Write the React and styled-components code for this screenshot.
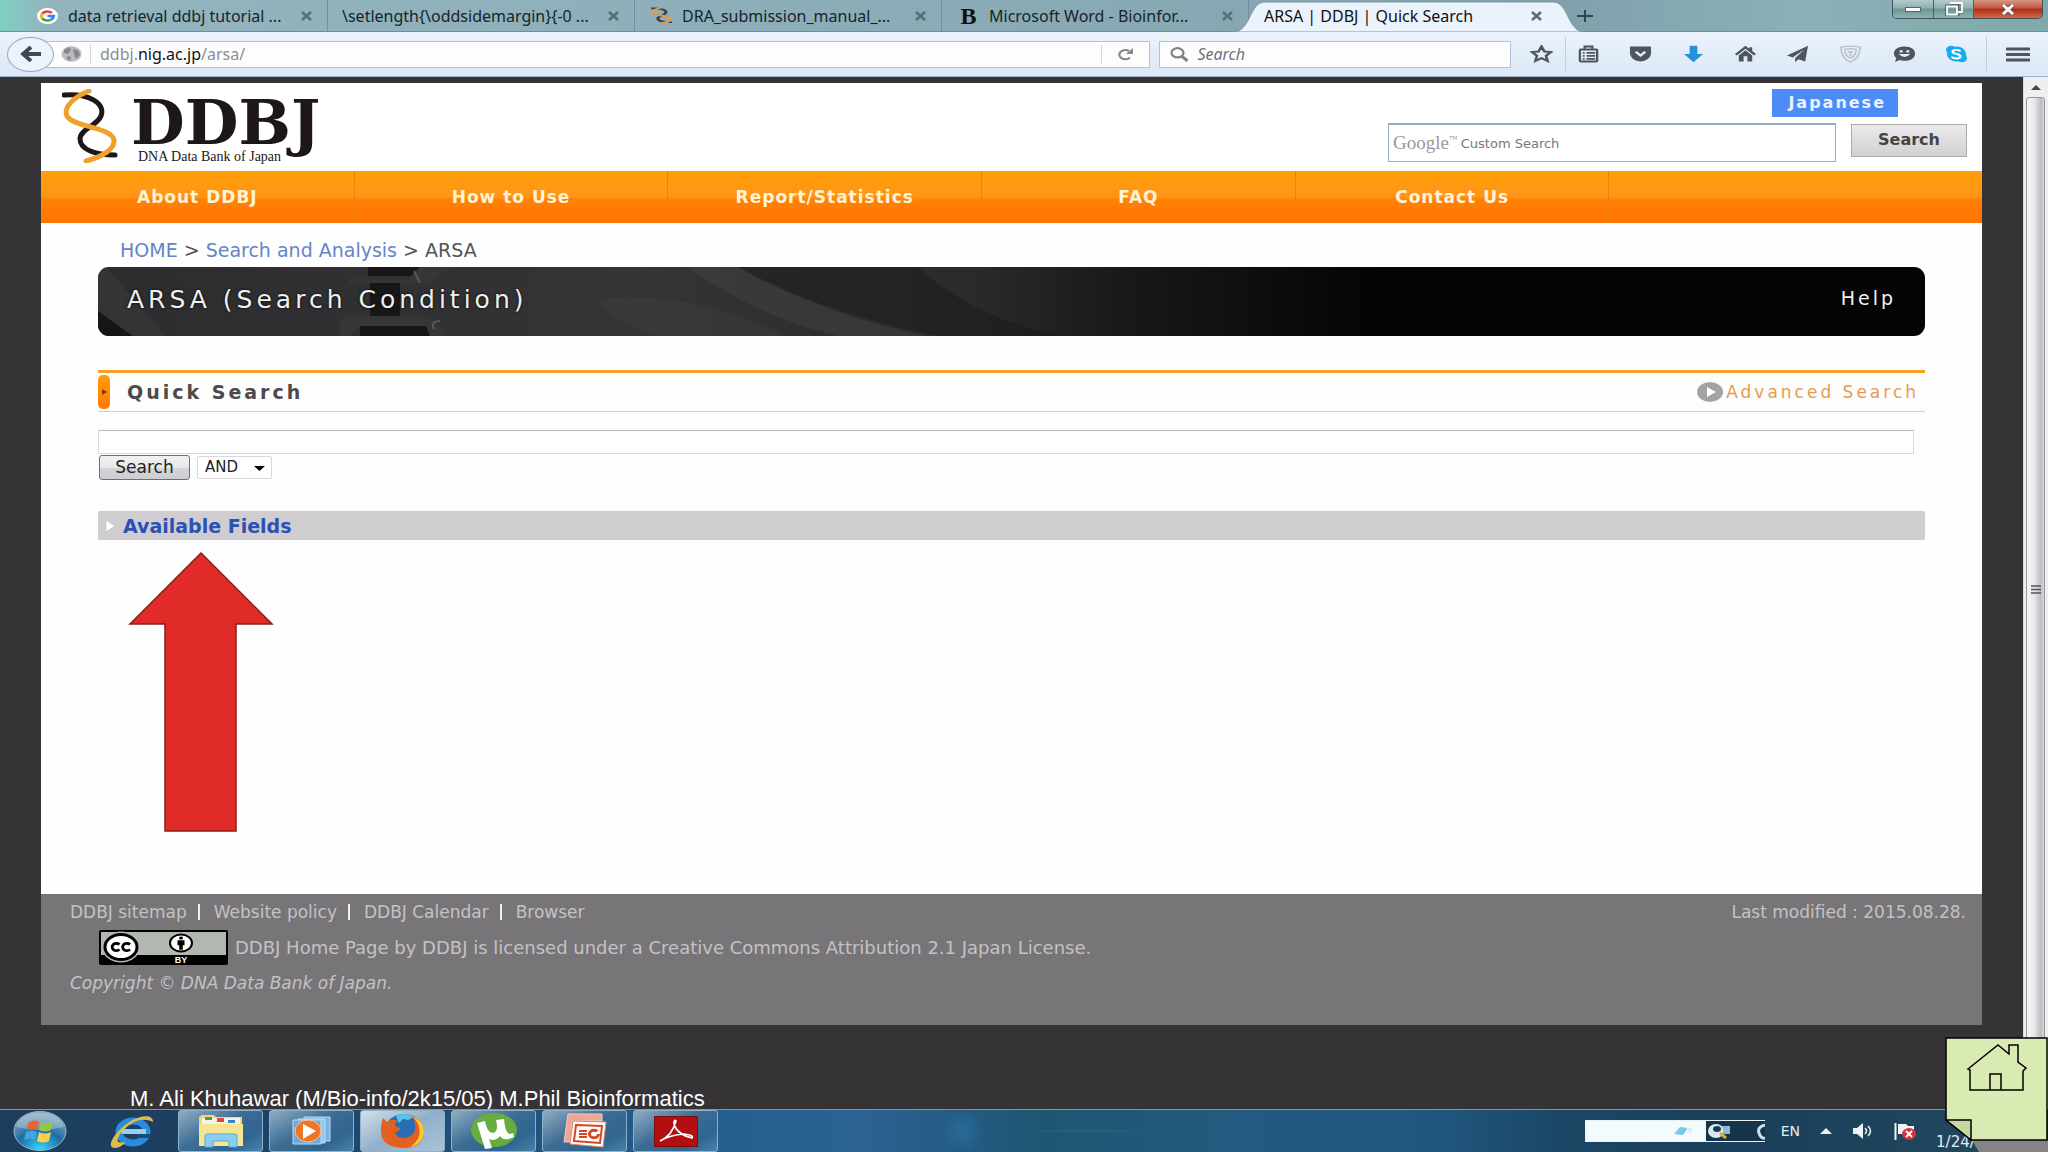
import React, { useState } from 'react';
import styled, { createGlobalStyle } from 'styled-components';

const GlobalStyle = createGlobalStyle`
  * {
    box-sizing: border-box;
  }
  body {
    margin: 0;
    background: #353336;
    font-family: 'DejaVu Sans', Verdana, sans-serif;
  }
  a {
    color: inherit;
    text-decoration: none;
  }
  button, input, select {
    font: inherit;
    margin: 0;
  }
  svg {
    display: block;
    flex: none;
  }
`;

const Screen = styled.div`
  position: relative;
  display: flex;
  flex-direction: column;
  min-height: 100vh;
  overflow: hidden;
`;

/* ---------- browser chrome ---------- */

const TabBar = styled.div`
  display: flex;
  height: 32px;
  padding-left: 21px;
  font: 16px 'Noto Sans', sans-serif;
  color: #17242b;
  background: linear-gradient(90deg, #7fcfc4 0, #93b3bd 50px, #8fafba 30%, #87a7b2 60%, #7f9fab 75%, #8cb0b7 88%, #7fa9ac 100%);
  border-bottom: 1px solid #6f8d9b;
`;
const Tab = styled.div`
  display: flex;
  align-items: center;
  flex: 0 1 307px;
  min-width: 0;
  gap: 10px;
  padding: 0 14px 0 ${(p) => (p.$icon ? '16px' : '14px')};
  border-right: 1px solid #728f9b;
`;
const ActiveTab = styled.div`
  position: relative;
  display: flex;
  align-items: center;
  flex: 0 1 308px;
  min-width: 0;
  height: 32px;
  margin-left: 6px;
  padding: 0 20px 0 9px;
  color: #111;
`;
const TabShape = styled.svg`
  position: absolute;
  left: -22px;
  top: 0;
  width: calc(100% + 44px);
  height: 32px;
`;
const TabTitle = styled.span`
  position: relative;
  flex: 1;
  overflow: hidden;
  white-space: nowrap;
`;
const IconButton = styled.button`
  position: relative;
  display: grid;
  place-items: center;
  flex: none;
  padding: 0;
  border: 0;
  background: none;
`;
const NewTab = styled(IconButton)`
  margin-left: 14px;
`;
const WindowButtons = styled.div`
  display: flex;
  height: 19px;
  margin: 0 5px 0 auto;
  border: 1px solid #3f5257;
  border-top: 0;
  border-radius: 0 0 5px 5px;
  overflow: hidden;
`;
const WindowButton = styled.button`
  display: grid;
  place-items: center;
  width: ${(p) => (p.$close ? '69px' : '40px')};
  padding: 0;
  border: 0;
  border-left: ${(p) => (p.$first ? '0' : '1px solid #4b6064')};
  background: ${(p) =>
    p.$close
      ? 'linear-gradient(#d79685, #c4563c 45%, #b02a14 50%, #d06a4a)'
      : 'linear-gradient(#b3cacb, #8fb0b0 45%, #6d9492 50%, #8db5b0)'};
`;

const Toolbar = styled.div`
  display: flex;
  align-items: center;
  height: 45px;
  padding-left: 7px;
  font: 16px 'Noto Sans', sans-serif;
  background: linear-gradient(#eaf2fc, #dce8f7);
  border-bottom: 1px solid #9fb0c4;
`;
const BackButton = styled(IconButton)`
  width: 47px;
  height: 35px;
  margin-right: -12px;
  border: 1px solid #9aa9ba;
  border-radius: 50%;
  background: #edf3fb;
  z-index: 1;
`;
const UrlBar = styled.div`
  display: flex;
  align-items: center;
  flex: 1112;
  height: 27px;
  padding-left: 18px;
  background: #fdfdfe;
  border: 1px solid #b4c2d3;
`;
const UrlInput = styled.div`
  display: flex;
  flex: 1;
  margin-left: 8px;
  padding-left: 9px;
  border-left: 1px solid #d3d7dc;
  line-height: 20px;
  color: #8a8d92;

  b {
    font-weight: 400;
    color: #111;
  }
`;
const Reload = styled(IconButton)`
  width: 48px;
  height: 18px;
  border-left: 1px solid #d3d7dc;
`;
const BrowserSearch = styled.label`
  display: flex;
  align-items: center;
  flex: 347;
  gap: 8px;
  height: 27px;
  margin-left: 9px;
  padding-left: 10px;
  background: #fdfdfe;
  border: 1px solid #b4c2d3;

  input {
    flex: 1;
    min-width: 0;
    padding: 0;
    border: 0;
    background: none;
  }
  input::placeholder {
    color: #6f7378;
    font-style: italic;
  }
`;
const ToolIcons = styled.div`
  display: flex;
  align-items: center;
  margin-left: 6px;
`;
const ToolIcon = styled(IconButton)`
  width: ${(p) => p.$w || 53}px;
  height: 35px;
  border-left: ${(p) => (p.$line ? '1px solid #c3cedb' : '0')};
`;

/* ---------- web page ---------- */

const Viewport = styled.div`
  display: flex;
  flex: 1;
`;
const PageColumn = styled.div`
  display: flex;
  flex: 1;
  flex-direction: column;
  padding: 6px 41px 0;
`;
const Header = styled.header`
  display: flex;
  justify-content: space-between;
  height: 88px;
  padding: 6px 15px 0 21px;
  background: #fff;
`;
const Logo = styled.a`
  display: flex;
  gap: 13px;
  color: #1d1718;
`;
const LogoWords = styled.div`
  display: flex;
  flex-direction: column;
  padding-top: 8px;
`;
const LogoName = styled.span`
  font: bold 62px/52px 'DejaVu Serif', serif;
`;
const LogoSub = styled.span`
  padding-left: 7px;
  font: 14px/16px 'Liberation Serif', serif;
`;
const HeaderTools = styled.div`
  display: flex;
  flex-direction: column;
  gap: 6px;
`;
const Language = styled.a`
  align-self: flex-end;
  margin-right: 69px;
  padding: 0 12px 0 16px;
  font-size: 16px;
  line-height: 28px;
  font-weight: bold;
  letter-spacing: 2px;
  color: #e9f2ff;
  background: #4d8bf7;
`;
const SiteSearch = styled.form`
  display: flex;
  gap: 15px;
`;
const SiteSearchBox = styled.label`
  display: flex;
  align-items: center;
  width: 448px;
  height: 39px;
  padding-left: 4px;
  border: 1px solid #98abc0;
  border-top-width: 2px;
  font-size: 13px;
  color: #777;

  span {
    margin-right: 3px;
    font: 19px 'Liberation Serif', serif;
    color: #999;
  }
  sup {
    font-size: 9px;
    vertical-align: 7px;
    line-height: 0;
  }
  input {
    flex: 1;
    min-width: 0;
    border: 0;
    background: none;
  }
`;
const SiteSearchButton = styled.button`
  width: 116px;
  height: 33px;
  margin-top: 1px;
  padding: 0 0 2px;
  font-size: 16px;
  font-weight: bold;
  color: #444;
  border: 1px solid #aaa;
  background: linear-gradient(#ebe9eb, #d2d0d2);
`;
const Nav = styled.nav`
  display: grid;
  grid-template-columns: repeat(5, 16fr) 19fr;
  height: 52px;
  background: linear-gradient(#ff9f06, #ff941a 50%, #ff8205 54%, #ff7303);
`;
const NavLink = styled.a`
  display: block;
  padding-top: 14px;
  font-size: 17px;
  line-height: 24px;
  font-weight: bold;
  letter-spacing: 1px;
  text-align: center;
  color: #fff3d6;
  border-right: 1px solid #ee8208;
`;
const Main = styled.main`
  flex: 1;
  padding: 14px 57px 0;
  background: #fefefe;
`;
const Breadcrumb = styled.div`
  padding-left: 22px;
  font-size: 19px;
  line-height: 26px;
  color: #555;

  a {
    color: #6485c6;
  }
`;
const Banner = styled.div`
  position: relative;
  display: flex;
  justify-content: space-between;
  height: 69px;
  margin-top: 4px;
  padding: 0 29px;
  line-height: 62px;
  color: #f0f0f0;
  border-radius: 11px;
  overflow: hidden;
  background: linear-gradient(90deg, #2d2c2e, #343335 30%, #2a292b 48%, #19181a 56%, #040305 70%, #040305);

  h1 {
    position: relative;
    margin: 0;
    font-size: 25px;
    line-height: 66px;
    font-weight: 400;
    letter-spacing: 4px;
    text-shadow: 0 0 3px #000;
  }
  a {
    font-size: 19px;
    letter-spacing: 3px;
  }
`;
const BannerArt = styled.svg`
  position: absolute;
  left: 0;
  top: 0;
`;
const SectionHead = styled.div`
  display: flex;
  align-items: center;
  height: 42px;
  margin-top: 34px;
  border-top: 3px solid #f5a02a;
  border-bottom: 1px solid #d2cfd2;
  background: #fdfdfd;

  h2 {
    flex: 1;
    margin: 0 0 0 17px;
    font-size: 19px;
    letter-spacing: 3px;
    color: #4b4a4c;
  }
  a {
    display: flex;
    align-items: center;
    gap: 3px;
    margin-right: 6px;
    font-size: 17px;
    letter-spacing: 3px;
    color: #e79a4e;
  }
`;
const SectionMark = styled.div`
  display: grid;
  place-items: center;
  width: 12px;
  height: 34px;
  border-radius: 5px;
  background: linear-gradient(#ff9d0c, #ff7a05);
`;
const QueryInput = styled.input`
  display: block;
  width: calc(100% - 11px);
  height: 24px;
  margin-top: 18px;
  border: 1px solid #dddadd;
  border-top: 1px solid #bdbabd;
  background: #fff;
`;
const QueryControls = styled.div`
  display: flex;
  align-items: center;
  gap: 7px;
  padding: 1px;
  font-size: 15px;
`;
const QueryButton = styled.button`
  width: 91px;
  height: 25px;
  padding: 0 0 2px;
  font-size: 17px;
  line-height: 20px;
  color: #222;
  border: 1px solid #6f6f72;
  border-radius: 3px;
  background: linear-gradient(#f2f2f3, #e8e8ea 50%, #d5d6d9 52%, #cdced1);
`;
const Dropdown = styled.div`
  position: relative;

  select {
    appearance: none;
    width: 75px;
    height: 23px;
    padding: 0 0 1px 7px;
    color: #222;
    border: 1px solid #d8d8da;
    border-radius: 2px;
    background: #fff;
  }
  svg {
    position: absolute;
    right: 7px;
    top: 10px;
    pointer-events: none;
  }
`;
const FieldsBar = styled.button`
  display: flex;
  align-items: center;
  gap: 8px;
  width: 100%;
  height: 29px;
  margin-top: 30px;
  padding: 0 0 0 8px;
  font-size: 19px;
  font-weight: bold;
  color: #2c50b4;
  border: 0;
  border-radius: 2px;
  background: #cfcdcf;
`;
const Pointer = styled.svg`
  margin: 11px 0 0 30px;
`;
const Footer = styled.footer`
  display: flex;
  justify-content: space-between;
  height: 131px;
  padding: 4px 16px 0 29px;
  font-size: 17px;
  line-height: 29px;
  color: #c4c2c4;
  background: #777578;

  p {
    margin: 0;
  }
`;
const FooterLinks = styled.div`
  display: flex;

  a + a {
    margin-left: 11px;
    padding-left: 16px;
    background: linear-gradient(#eee, #eee) 0 6px / 2px 16px no-repeat;
  }
`;
const License = styled.p`
  display: flex;
  align-items: center;
  gap: 7px;
  height: 40px;
  padding-left: 29px;
  font-size: 18px;
`;
const Copyright = styled.p`
  padding-top: 2px;
  font-style: italic;
`;
const Caption = styled.p`
  height: 84px;
  margin: 0 0 0 89px;
  padding-top: 62px;
  font: 22px/24px 'Liberation Sans', Arial, sans-serif;
  color: #fff;
`;
const Scrollbar = styled.div`
  display: flex;
  flex-direction: column;
  width: 25px;
  padding: 0 3px 28px 2px;
  background: #efeef0;
  border-left: 1px solid #d9d8da;
`;
const ScrollUp = styled(IconButton)`
  height: 20px;
`;
const ScrollThumb = styled.div`
  display: grid;
  place-items: center;
  flex: 1;
  border: 1px solid #97969a;
  border-radius: 3px;
  background: linear-gradient(90deg, #f6f5f7, #e6e5e7 45%, #bfbdc1 80%, #d6d5d7);
`;

/* ---------- desktop ---------- */

const Taskbar = styled.div`
  display: flex;
  align-items: center;
  height: 43px;
  padding-left: 12px;
  border-top: 1px solid #6f9bb3;
  background:
    radial-gradient(circle at 47% 50%, #2b7ab088 0, transparent 22px),
    radial-gradient(ellipse at 53% 50%, #35647a 0, transparent 70px),
    linear-gradient(90deg, #1d3d5c 0, #1c4163 12%, #255f8f 35%, #2b6294 42%, #1e5672 51%, #245a7f 60%, #20577f 70%, #1b4766 76%, #1b3f59 85%, #214a5f 100%);
`;
const TaskIcon = styled.button`
  display: grid;
  place-items: center;
  height: 42px;
  padding: ${(p) => (p.$start ? '0' : '0 23px 0 39px')};
  border: 0;
  background: none;
`;
const TaskButton = styled.button`
  display: grid;
  place-items: center;
  width: 85px;
  height: 42px;
  margin-right: 6px;
  padding: 0;
  border: 1px solid #8db2cb;
  border-radius: 3px;
  background: ${(p) =>
    p.$active
      ? 'linear-gradient(150deg, #d5e0ea, #91afc9 50%, #aac4d8)'
      : 'linear-gradient(150deg, #8fadc2, #3c6c94 45%, #2f658f 75%, #4a82a8)'};
`;
const Tray = styled.div`
  display: flex;
  align-items: center;
  align-self: stretch;
  gap: 20px;
  margin-left: auto;
  padding-right: 35px;
  font-size: 14px;
  color: #e6edf2;
`;
const Deskband = styled.div`
  display: flex;
  align-items: center;
  width: 180px;
  height: 22px;
  margin-right: -4px;
  border: 1px solid #e9f2f6;
  border-right: 0;
  background: #15344a;
`;
const DeskbandField = styled.div`
  display: grid;
  place-items: center end;
  width: 120px;
  height: 20px;
  padding-right: 12px;
  background: #f4fbfd;
`;
const Clock = styled.time`
  align-self: flex-end;
  font-size: 15px;
  line-height: 20px;
  white-space: nowrap;
`;
const HomeNote = styled.a`
  position: absolute;
  right: 0;
  bottom: 0;
`;

function CloseGlyph() {
  return (
    <svg width="13" height="10" viewBox="0 0 13 10">
      <path d="M2 1l9 8M11 1L2 9" stroke="#5b6d76" strokeWidth="2.6" />
    </svg>
  );
}

function HelixIcon({ width, height, dark, bright, stroke }) {
  return (
    <svg width={width} height={height} viewBox="0 0 56 74" preserveAspectRatio="none">
      <g fill="none" strokeLinecap="round" strokeWidth={stroke}>
        <path d="M2 6C26 4 44 14 39 27C35 37 18 40 18 50C18 60 32 66 53 66" stroke={dark} />
        <path d="M27 2C12 8 1 18 5 27C10 38 50 38 52 51C53 60 40 68 24 72" stroke={bright} />
      </g>
    </svg>
  );
}

const tabIcons = {
  google: (
    <svg width="21" height="16" viewBox="0 0 24 24" preserveAspectRatio="none">
      <circle cx="12" cy="12" r="12" fill="#fff" />
      <g fill="none" strokeWidth="3.6">
        <path d="M17 7.5A7 7 0 0 0 6 8.5" stroke="#e54335" />
        <path d="M6 8.5a7 7 0 0 0 0 7" stroke="#f4b82e" />
        <path d="M6 15.5a7 7 0 0 0 10 2" stroke="#34a353" />
        <path d="M16 17.5a7 7 0 0 0 3-5.5h-7" stroke="#4280ef" />
      </g>
    </svg>
  ),
  helix: <HelixIcon width={21} height={17} dark="#3b4448" bright="#dd9c48" stroke={8} />,
};

const BTabIcon = styled.span`
  width: 21px;
  font: bold 24px/24px 'Liberation Serif', serif;
  text-align: center;
  color: #111;
`;

const tabs = [
  { title: 'data retrieval ddbj tutorial ...', icon: tabIcons.google },
  { title: '\\setlength{\\oddsidemargin}{-0 ...' },
  { title: 'DRA_submission_manual_...', icon: tabIcons.helix },
  { title: 'Microsoft Word - Bioinfor...', icon: <BTabIcon>B</BTabIcon> },
];

const tools = [
  {
    name: 'Bookmark',
    w: 48,
    art: <path d="M12 2l3 6.6 7 .8-5.200 4.800 1.500 7L12 17.600 5.700 21.200l1.500-7L2 9.400l7-.8z" fill="none" stroke="#4c5561" strokeWidth="2.800" />,
  },
  {
    name: 'Bookmarks list',
    w: 45,
    line: true,
    art: (
      <g fill="none" stroke="#4c5561" strokeWidth="2.400">
        <rect x="3" y="6" width="18" height="16" rx="1" />
        <path d="M8 5V2h8v3M6 10.500h2m2 0h9M6 14.500h2m2 0h9M6 18.500h2m2 0h9" />
      </g>
    ),
  },
  {
    name: 'Pocket',
    w: 60,
    art: (
      <g>
        <path d="M2 2h20q1 0 1 1.500V11a11 11 0 0 1-22 0V3.500Q1 2 2 2z" fill="#4c5561" />
        <path d="M7 9l5 5 5-5" fill="none" stroke="#e6eef9" strokeWidth="2.800" />
      </g>
    ),
  },
  { name: 'Downloads', w: 46, art: <path d="M8 1h8v11h6L12 23 2 12h6z" fill="#2394dc" /> },
  {
    name: 'Home',
    w: 59,
    art: <path d="M12 1L1 12l2 2 9-9 9 9 2-2-4-4V3h-3v2zM12 7l-7 7v8h5v-7h4v7h5v-8z" fill="#4c5561" />,
  },
  { name: 'Share', w: 44, art: <path d="M23 1L1 14l6 2.500L19 6 9.500 17.500V23l3.500-4 7 3z" fill="#4c5561" /> },
  {
    name: 'Shield',
    w: 63,
    art: (
      <g fill="none" stroke="#bcc2c9" strokeWidth="1.800">
        <path d="M2 3q10-3 20 0 0 14-10 20Q2 17 2 3z" />
        <path d="M6 6q6-2 12 0 0 8-6 12Q6 14 6 6zM9 9h6M12 9v6" />
      </g>
    ),
  },
  {
    name: 'Chat',
    w: 44,
    art: (
      <g>
        <path d="M12 2c7 0 11 4 11 9.500S19 21 12 21c-2 0-3.500-.3-5-1l-5 2.500 1.500-5C2 15.500 1 13.500 1 11.500 1 6 5 2 12 2z" fill="#4c5561" />
        <path d="M6 12q6 8 12 0zM7 7h3v3H7zM14 7h3v3h-3z" fill="#e6eef9" />
      </g>
    ),
  },
  {
    name: 'Skype',
    w: 60,
    art: (
      <g>
        <circle cx="12" cy="12" r="10" fill="#14aef0" />
        <circle cx="6.500" cy="6.500" r="5.500" fill="#14aef0" />
        <circle cx="17.500" cy="17.500" r="5.500" fill="#14aef0" />
        <path d="M16 8.500C15 6 8 5.500 8 9s8 2 8 6-8 3.500-8.500.5" fill="none" stroke="#fff" strokeWidth="2.600" />
      </g>
    ),
  },
];

const BrowserChrome = () => (
  <>
    <TabBar>
      {tabs.map((tab) => (
        <Tab key={tab.title} $icon={Boolean(tab.icon)}>
          {tab.icon}
          <TabTitle>{tab.title}</TabTitle>
          <IconButton aria-label="Close tab">
            <CloseGlyph />
          </IconButton>
        </Tab>
      ))}
      <ActiveTab>
        <TabShape viewBox="0 0 352 32" preserveAspectRatio="none">
          <path d="M0 32C18 32 16 2 32 2H320C336 2 334 32 352 32z" fill="#eaf2fb" stroke="#7d97a5" />
        </TabShape>
        <TabTitle>ARSA | DDBJ | Quick Search</TabTitle>
        <IconButton aria-label="Close tab">
          <CloseGlyph />
        </IconButton>
      </ActiveTab>
      <NewTab aria-label="New tab">
        <svg width="16" height="12" viewBox="0 0 16 12">
          <path d="M8 0v12M0 6h16" stroke="#33464e" strokeWidth="2" />
        </svg>
      </NewTab>
      <WindowButtons>
        <WindowButton $first aria-label="Minimize">
          <svg width="16" height="5">
            <rect x=".5" y=".5" width="15" height="4" fill="#fff" stroke="#56686c" />
          </svg>
        </WindowButton>
        <WindowButton aria-label="Restore">
          <svg width="18" height="14" viewBox="0 0 18 14">
            <path d="M5 1h12v9h-4M1 4h12v9H1z" fill="none" stroke="#56686c" strokeWidth="3" />
            <path d="M5 1h12v9h-4M2 4.500h10v8H2z" fill="none" stroke="#fff" strokeWidth="1.800" />
          </svg>
        </WindowButton>
        <WindowButton $close aria-label="Close">
          <svg width="16" height="11" viewBox="0 0 16 11">
            <path d="M3 1l10 9M13 1L3 10" stroke="#6b4540" strokeWidth="4.600" />
            <path d="M3 1l10 9M13 1L3 10" stroke="#fff" strokeWidth="3" />
          </svg>
        </WindowButton>
      </WindowButtons>
    </TabBar>
    <Toolbar>
      <BackButton aria-label="Back">
        <svg width="22" height="16" viewBox="0 0 22 16">
          <path d="M11 1L3 8l8 7M3 8h18" fill="none" stroke="#3f4854" strokeWidth="3.800" />
        </svg>
      </BackButton>
      <UrlBar>
        <svg width="21" height="16" viewBox="0 0 21 16">
          <ellipse cx="10.500" cy="8" rx="10" ry="7.800" fill="#b9bbbe" />
          <path d="M3 4l5-3 2 3-3 4-4-1zM12 3l5 1 2 5-4 4-2-5zM6 10l4 1-1 4-3-2z" fill="#85888c" />
        </svg>
        <UrlInput>
          ddbj.<b>nig.ac.jp</b>/arsa/
        </UrlInput>
        <Reload aria-label="Reload">
          <svg width="17" height="13" viewBox="0 0 17 13">
            <path d="M13 9.500A6 4.600 0 1 1 12 3" fill="none" stroke="#85898e" strokeWidth="2.200" />
            <path d="M16 0v6H9z" fill="#85898e" />
          </svg>
        </Reload>
      </UrlBar>
      <BrowserSearch>
        <svg width="19" height="15" viewBox="0 0 19 15">
          <ellipse cx="7.500" cy="5.800" rx="6" ry="4.600" fill="none" stroke="#7f8388" strokeWidth="2.200" />
          <path d="M11.500 9l6 5" stroke="#7f8388" strokeWidth="3" />
        </svg>
        <input placeholder="Search" aria-label="Search the web" />
      </BrowserSearch>
      <ToolIcons>
        {tools.map((tool) => (
          <ToolIcon key={tool.name} $w={tool.w} $line={tool.line} aria-label={tool.name}>
            <svg width="23" height="18" viewBox="0 0 24 24" preserveAspectRatio="none">
              {tool.art}
            </svg>
          </ToolIcon>
        ))}
        <ToolIcon $w={62} $line aria-label="Menu">
          <svg width="24" height="15" viewBox="0 0 24 15">
            <path d="M1 2h22M1 7.500h22M1 13h22" stroke="#4c5561" strokeWidth="3" strokeLinecap="round" />
          </svg>
        </ToolIcon>
      </ToolIcons>
    </Toolbar>
  </>
);

const SiteHeader = () => (
  <Header>
    <Logo href="#">
      <HelixIcon width={56} height={74} dark="#1d1718" bright="#f0a02c" stroke={5} />
      <LogoWords>
        <LogoName>DDBJ</LogoName>
        <LogoSub>DNA Data Bank of Japan</LogoSub>
      </LogoWords>
    </Logo>
    <HeaderTools>
      <Language href="#">Japanese</Language>
      <SiteSearch onSubmit={(e) => e.preventDefault()}>
        <SiteSearchBox>
          <span>
            Google<sup>™</sup>
          </span>
          Custom Search
          <input />
        </SiteSearchBox>
        <SiteSearchButton>Search</SiteSearchButton>
      </SiteSearch>
    </HeaderTools>
  </Header>
);

const navItems = ['About DDBJ', 'How to Use', 'Report/Statistics', 'FAQ', 'Contact Us'];

const CcBadge = () => (
  <svg width="129" height="35" viewBox="0 0 129 35">
    <rect x="1" y="1" width="127" height="33" rx="1" fill="#b1b8b0" stroke="#000" strokeWidth="2" />
    <path d="M1 25h127v9H1z" fill="#000" />
    <ellipse cx="22" cy="17" rx="19" ry="15.500" fill="#b1b8b0" />
    <ellipse cx="22" cy="17" rx="16" ry="12.500" fill="#fff" stroke="#000" strokeWidth="3" />
    <path d="M20.500 14.500a4.300 3.600 0 1 0 0 5M31 14.500a4.300 3.600 0 1 0 0 5" fill="none" stroke="#000" strokeWidth="2.800" />
    <ellipse cx="82" cy="13" rx="11" ry="8.500" fill="#fff" stroke="#000" strokeWidth="2" />
    <ellipse cx="82" cy="8" rx="2" ry="1.600" fill="#000" />
    <path d="M78.500 10.300h7v5h-1.700v4.500h-3.600v-4.500h-1.700z" fill="#000" />
    <text x="82" y="32.500" textAnchor="middle" fontFamily="Liberation Sans" fontWeight="bold" fontSize="9" fill="#fff">
      BY
    </text>
  </svg>
);

const taskIcons = {
  start: (
    <svg width="56" height="42" viewBox="0 0 56 42">
      <defs>
        <radialGradient id="orb" cx=".5" cy=".95" r=".9">
          <stop offset="0" stopColor="#35d3fb" />
          <stop offset=".5" stopColor="#1c6fa8" />
          <stop offset="1" stopColor="#8aa7ba" />
        </radialGradient>
      </defs>
      <ellipse cx="28" cy="21" rx="26" ry="19.500" fill="url(#orb)" stroke="#9db9c9" />
      <path d="M4 17Q8 3 28 3T52 17Q28 23 4 17z" fill="#dce8ef" opacity=".35" />
      <path d="M17 12q5-3 10 0l-2 8q-5-3-11 0z" fill="#ea6432" />
      <path d="M29 12q6 3 12-1l-2 9q-6 3-12 0z" fill="#94c648" />
      <path d="M14 22q5-3 11 0l-2 8q-5-3-11 0z" fill="#42a5e4" />
      <path d="M27 22q6 3 12 0l-2 9q-6 3-12 0z" fill="#fdcf4d" />
    </svg>
  ),
  ie: (
    <svg width="48" height="36" viewBox="0 0 48 36">
      <ellipse cx="26" cy="19" rx="14" ry="11" fill="none" stroke="#2b8bdc" strokeWidth="7" />
      <path d="M15 18.500h24" stroke="#8fd0f7" strokeWidth="5" />
      <path d="M30 21h13v4H30z" fill="#1d4a70" />
      <path d="M46 9C46 0 30 2 17 13S0 35 8 35c4 0 8-3 11-6C10 31 8 28 14 20S33 2 46 9z" fill="#dcbd4c" />
    </svg>
  ),
  explorer: (
    <svg width="46" height="34" viewBox="0 0 46 34">
      <path d="M1 3l3-2h12l2 2h26v29H1z" fill="#f1d778" />
      <path d="M4 4h38v7H4z" fill="#f6f3e2" />
      <path d="M7 3h7v3H7z" fill="#4f9b4b" />
      <path d="M19 4h7v4h-7z" fill="#dd4b32" />
      <path d="M30 6h7v3h-7z" fill="#3a83c9" />
      <path d="M1 10h44v22H1z" fill="#f5e492" />
      <path d="M7 33V22q0-2 3-2h26q3 0 3 2v11h-8v-6H15v6z" fill="#8bcff0" stroke="#5aa5d3" />
    </svg>
  ),
  player: (
    <svg width="40" height="30" viewBox="0 0 40 30">
      <path d="M12 1h26v24H12z" fill="#79b3df" stroke="#b9def5" />
      <path d="M6 3h27v24H6z" fill="#94c7ea" stroke="#b9def5" />
      <path d="M1 4h28v24H1z" fill="#69abe0" stroke="#b9def5" />
      <ellipse cx="16" cy="15" rx="13" ry="11" fill="#ee7526" stroke="#f9c79c" />
      <path d="M11 8l13 7-13 8z" fill="#fff" />
    </svg>
  ),
  firefox: (
    <svg width="46" height="36" viewBox="0 0 46 36">
      <ellipse cx="24" cy="17" rx="19" ry="16" fill="#2a6db5" />
      <path d="M16 3q9-5 18 1l-6 3-5-1-4 4z" fill="#5cc3e8" />
      <path d="M3 5l4 4q5-4 11-1-4 2-3 5l5 2q0 3-5 4 2 7 10 6 12-2 10-15-1-4-3-7 12 5 12 16-1 16-21 16Q1 34 1 18 1 10 3 5z" fill="#e3611e" />
      <path d="M32 3q12 5 12 16-1 12-14 15 12-8 9-20-2-7-7-11z" fill="#fcc934" />
    </svg>
  ),
  utorrent: (
    <svg width="48" height="36" viewBox="0 0 48 36">
      <ellipse cx="24" cy="17" rx="23" ry="17" fill="#66ad3d" />
      <path d="M7 10l8-2q2 12 8 12 6-1 3-13l8-1q1 14 6 15l3-1 1 4q-10 5-14-1-5 6-11 3l3 9-7 1z" fill="#fff" />
    </svg>
  ),
  powerpoint: (
    <svg width="46" height="36" viewBox="0 0 46 36">
      <path d="M6 1h34v7H10l-1 21H2z" fill="#f2a595" stroke="#e9d0ca" />
      <path d="M11 8l33 1-3 25-33-3z" fill="#fff" stroke="#e08a74" />
      <path d="M14 12l26 1-2 17-26-2z" fill="#fff" stroke="#d5451f" strokeWidth="2" />
      <path d="M17 18h8M17 21h8M17 24h8" stroke="#d5451f" strokeWidth="2" />
      <ellipse cx="32" cy="21" rx="4.500" ry="3.800" fill="none" stroke="#d5451f" strokeWidth="3" />
      <path d="M32 21l6-5v5z" fill="#fff" />
    </svg>
  ),
  acrobat: (
    <svg width="44" height="31" viewBox="0 0 44 31">
      <rect width="43" height="30" x=".5" y=".5" fill="#b40f10" stroke="#7b0c0c" />
      <path d="M6 25Q18 20 22 5 20 3 20 7 22 18 38 22 40 19 30 18 16 19 6 25z" fill="none" stroke="#fff" strokeWidth="1.700" />
    </svg>
  ),
};

const DesktopBar = () => (
  <Taskbar>
    <TaskIcon $start aria-label="Start">
      {taskIcons.start}
    </TaskIcon>
    <TaskIcon aria-label="Internet Explorer">{taskIcons.ie}</TaskIcon>
    {['explorer', 'player', 'firefox', 'utorrent', 'powerpoint', 'acrobat'].map((app) => (
      <TaskButton key={app} $active={app === 'firefox'} aria-label={app}>
        {taskIcons[app]}
      </TaskButton>
    ))}
    <Tray>
      <Deskband>
        <DeskbandField>
          <svg width="22" height="12" viewBox="0 0 22 12">
            <path d="M2 9l6-7 8 1-5 7z" fill="#7cc8e8" />
            <path d="M14 3h7l-3 5z" fill="#d3eef8" />
          </svg>
        </DeskbandField>
        <svg width="59" height="18" viewBox="0 0 59 18">
          <ellipse cx="10" cy="9" rx="8" ry="7" fill="#dbe8ef" />
          <ellipse cx="11" cy="7" rx="4" ry="3" fill="#1b3b55" />
          <path d="M16 4h8v8h-6z" fill="#94b9ce" />
          <path d="M14 11l6 5" stroke="#e0a93e" strokeWidth="3" />
          <path d="M59 3q-8 2-6 8t6 5" fill="none" stroke="#cfdfe8" strokeWidth="3" />
        </svg>
      </Deskband>
      <span>EN</span>
      <svg width="12" height="6">
        <path d="M0 6l6-6 6 6z" fill="#e8f0f4" />
      </svg>
      <svg width="22" height="16" viewBox="0 0 22 16">
        <path d="M1 5h4l6-5v16l-6-5H1z" fill="#eef3f5" />
        <path d="M13 5q3 3 0 6M16 3q5 5 0 10" fill="none" stroke="#dfe8ec" strokeWidth="1.600" />
      </svg>
      <svg width="22" height="18" viewBox="0 0 22 18">
        <path d="M1.500 1v17" stroke="#eef3f5" strokeWidth="2" />
        <path d="M4 2h8l2 2h6v8H4z" fill="#eef3f5" />
        <ellipse cx="15" cy="12" rx="7" ry="6" fill="#d9303a" />
        <path d="M12 9l6 6M18 9l-6 6" stroke="#fff" strokeWidth="1.800" />
      </svg>
      <Clock>1/24/2016</Clock>
    </Tray>
  </Taskbar>
);

const App = () => {
  const [operator, setOperator] = useState('AND');

  return (
    <Screen>
      <GlobalStyle />
      <BrowserChrome />
      <Viewport>
        <PageColumn>
          <SiteHeader />
          <Nav>
            {navItems.map((item) => (
              <NavLink key={item} href="#">
                {item}
              </NavLink>
            ))}
          </Nav>
          <Main>
            <Breadcrumb>
              <a href="#">HOME</a> &gt; <a href="#">Search and Analysis</a> &gt; ARSA
            </Breadcrumb>
            <Banner>
              <BannerArt width="1300" height="69" viewBox="0 0 1300 69">
                <path d="M0 0l8 0 60 69H36L0 44z" fill="#3a393b" opacity=".6" />
                <path d="M0 44l34 25H0z" fill="#151416" />
                <path d="M500 32q90-10 190 37H560q-60-20-60-37z" fill="#454446" opacity=".3" />
                <path d="M590 0h50q90 50 190 69H740Q660 50 590 0z" fill="#454446" opacity=".45" />
                <path d="M640 0h180q50 48 140 69H840Q720 45 640 0z" fill="#19181a" opacity=".45" />
                <path d="M270 0h60v9h-60zM272 15h30v44h-30zM262 52h72v17h-72z" fill="#171618" />
                <path d="M250 12h60l12-12h32l-22 16h-80zM242 69q-2-20 8-20h70q20 0 28 20h-16l-4-10h-68l-8 10z" fill="#363538" />
                <path d="M316 4l6 12M342 54q-10 0-6 8" fill="none" stroke="#58575b" strokeWidth="2" />
              </BannerArt>
              <h1>ARSA (Search Condition)</h1>
              <a href="#">Help</a>
            </Banner>
            <SectionHead>
              <SectionMark>
                <svg width="5" height="6">
                  <path d="M0 0l5 3-5 3z" fill="#7a3d06" />
                </svg>
              </SectionMark>
              <h2>Quick Search</h2>
              <a href="#">
                <svg width="26" height="20" viewBox="0 0 26 20">
                  <ellipse cx="13" cy="10" rx="13" ry="10" fill="#a3a2a4" />
                  <path d="M10 5l9 5-9 5z" fill="#fff" />
                </svg>
                Advanced Search
              </a>
            </SectionHead>
            <QueryInput aria-label="Keyword" />
            <QueryControls>
              <QueryButton>Search</QueryButton>
              <Dropdown>
                <select aria-label="Operator" value={operator} onChange={(e) => setOperator(e.target.value)}>
                  <option>AND</option>
                  <option>OR</option>
                </select>
                <svg width="11" height="5">
                  <path d="M0 0h11L5.500 5z" fill="#000" />
                </svg>
              </Dropdown>
            </QueryControls>
            <FieldsBar>
              <svg width="9" height="14">
                <path d="M0 1l9 6-9 6z" fill="#fff" stroke="#aaa" strokeWidth=".5" />
              </svg>
              Available Fields
            </FieldsBar>
            <Pointer width="146" height="282" viewBox="0 0 146 282">
              <path d="M73 2l71 71h-36v207H37V73H2z" fill="#e02b28" stroke="#8c1c1a" strokeWidth="1.500" />
            </Pointer>
          </Main>
          <Footer>
            <div>
              <FooterLinks>
                <a href="#">DDBJ sitemap</a>
                <a href="#">Website policy</a>
                <a href="#">DDBJ Calendar</a>
                <a href="#">Browser</a>
              </FooterLinks>
              <License>
                <CcBadge />
                <span>
                  <a href="#">DDBJ Home Page</a> by <a href="#">DDBJ</a> is licensed under a{' '}
                  <a href="#">Creative Commons Attribution 2.1 Japan License</a>.
                </span>
              </License>
              <Copyright>Copyright © DNA Data Bank of Japan.</Copyright>
            </div>
            <p>Last modified : 2015.08.28.</p>
          </Footer>
          <Caption>M. Ali Khuhawar (M/Bio-info/2k15/05) M.Phil Bioinformatics</Caption>
        </PageColumn>
        <Scrollbar>
          <ScrollUp aria-label="Scroll up">
            <svg width="10" height="5">
              <path d="M0 5l5-5 5 5z" fill="#444" />
            </svg>
          </ScrollUp>
          <ScrollThumb>
            <svg width="10" height="9">
              <path d="M0 1h10M0 4.500h10M0 8h10" stroke="#55545a" strokeWidth="1.500" />
            </svg>
          </ScrollThumb>
        </Scrollbar>
      </Viewport>
      <DesktopBar />
      <HomeNote href="#" aria-label="Home">
        <svg width="103" height="115" viewBox="0 0 103 115">
          <path d="M27 103h76v12H34z" fill="#858386" />
          <path d="M1 1h101v102H26L1 83z" fill="#d9ebb3" stroke="#000" strokeWidth="1.500" />
          <path d="M1 83h25v20z" fill="#c6d7a3" stroke="#000" strokeWidth="1.500" />
          <path d="M23 32L53 8l11 9V8h9v17l8 6-3 3v19H25V33zM45 53V37h11v16" fill="none" stroke="#000" strokeWidth="1.500" />
        </svg>
      </HomeNote>
    </Screen>
  );
};

export default App;
